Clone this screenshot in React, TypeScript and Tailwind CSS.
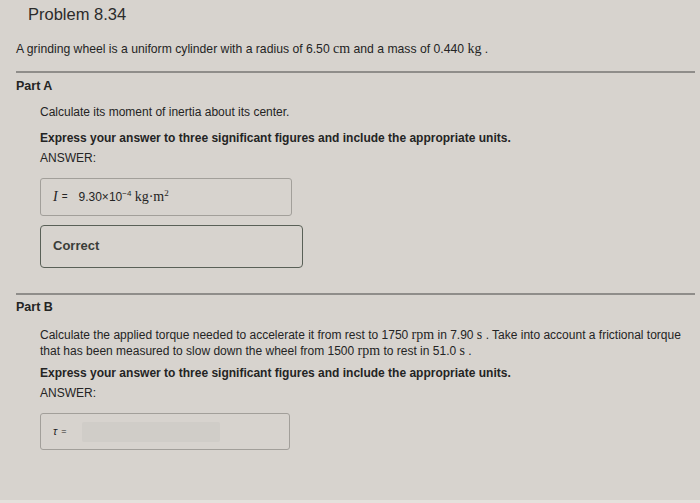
import React from 'react';

const sans = { fontFamily: '"Liberation Sans", Arial, sans-serif' };

function U({ children }: { children: React.ReactNode }) {
  return <span className="font-['Liberation_Serif',serif] text-[14px]">{children}</span>;
}

function Rule() {
  return <div className="h-[2px] bg-[#8f8d8a] ml-[16px] w-[679px]" />;
}

export default function App() {
  return (
    <div
      className="w-[700px] h-[503px] overflow-hidden bg-[#d7d3ce] text-[#242424] flex flex-col"
      style={sans}
    >
      <div className="mt-[4px] ml-[28px] text-[16.5px] leading-[20px] text-[#2b2b2b]">Problem 8.34</div>

      <div className="mt-[17px] ml-[16px] text-[12.2px] leading-[16px]">
        A grinding wheel is a uniform cylinder with a radius of 6.50 <U>cm</U> and a mass of 0.440 <U>kg</U> .
      </div>

      <div className="mt-[14px]"><Rule /></div>

      <div className="mt-[5px] ml-[16px] text-[12.5px] leading-[16px] font-bold">Part A</div>

      <div className="ml-[40px] flex flex-col">
        <div className="mt-[10px] text-[12px] leading-[16px]">Calculate its moment of inertia about its center.</div>
        <div className="mt-[10px] text-[12px] leading-[16px] font-bold">
          Express your answer to three significant figures and include the appropriate units.
        </div>
        <div className="mt-[4px] text-[12px] leading-[16px]">ANSWER:</div>

        <div className="mt-[12px] w-[252px] h-[38px] border border-[#a29f9a] rounded-[3px] flex items-center pl-[12px] gap-[8px] pb-[2px]">
          <span className="font-['Liberation_Serif',serif] italic text-[14px]">I</span>
          <span className="text-[10px] -ml-[4px]">=</span>
          <span className="text-[12px] ml-[3px]">
            9.30×10<sup className="text-[8px] -top-[0.6em]">−4</sup>{' '}
            <span className="font-['Liberation_Serif',serif] text-[14px]">
              kg·m<sup className="text-[9px]">2</sup>
            </span>
          </span>
        </div>

        <div className="mt-[9px] w-[263px] h-[43px] border-[1.5px] border-[#596057] rounded-[4px] flex items-center pl-[12px] pb-[2px]">
          <span className="font-bold text-[13px] text-[#3a3d39]">Correct</span>
        </div>
      </div>

      <div className="mt-[25px]"><Rule /></div>

      <div className="mt-[4px] ml-[16px] text-[12.5px] leading-[16px] font-bold">Part B</div>

      <div className="ml-[40px] flex flex-col">
        <div className="mt-[12px] text-[12px] leading-[16px] w-[650px]">
          Calculate the applied torque needed to accelerate it from rest to 1750 <U>rpm</U> in 7.90 <U>s</U> . Take into account a frictional torque
          <br />
          that has been measured to slow down the wheel from 1500 <U>rpm</U> to rest in 51.0 <U>s</U> .
        </div>
        <div className="mt-[6px] text-[12px] leading-[16px] font-bold">
          Express your answer to three significant figures and include the appropriate units.
        </div>
        <div className="mt-[4px] text-[12px] leading-[16px]">ANSWER:</div>

        <div className="mt-[12px] w-[250px] h-[37px] border border-[#a29f9a] rounded-[3px] flex items-center pl-[12px]">
          <span className="italic text-[11px]">τ</span>
          <span className="text-[9px] ml-[4px]">=</span>
          <div className="ml-[16px] w-[138px] h-[20px] bg-[#d0cdc8] rounded-[2px]" />
        </div>
      </div>

      <div className="mt-auto h-[3px] bg-[#e4e1dc]" />
    </div>
  );
}
